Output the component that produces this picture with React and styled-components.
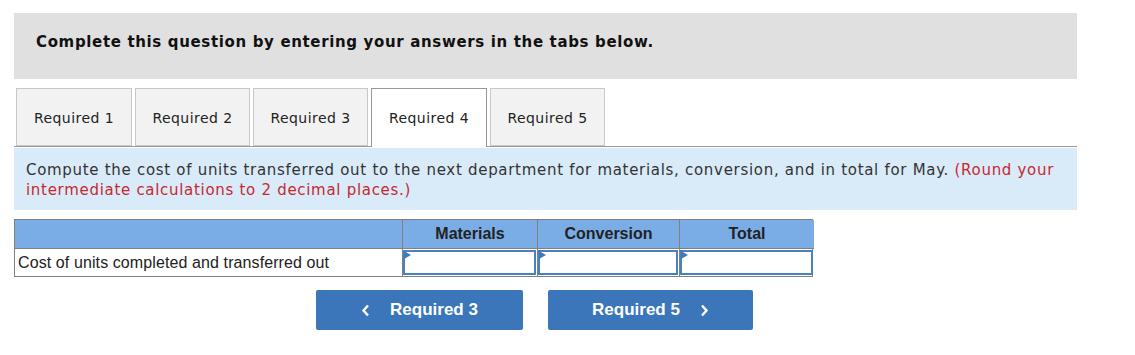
import styled, { createGlobalStyle } from "styled-components";

const GlobalStyle = createGlobalStyle`
  body {
    margin: 0;
    background: #fff;
    font-family: "DejaVu Sans", Verdana, sans-serif;
  }
`;

const Page = styled.div`
  width: 1063px;
  padding: 13px 0 0 14px;
`;

const Banner = styled.div`
  height: 66px;
  background: #e0e0e0;
  padding: 20px 22px 0;
  font-weight: bold;
  font-size: 15px;
  letter-spacing: 0.65px;
  color: #111;
  box-sizing: border-box;
`;

const TabStrip = styled.div`
  display: flex;
  align-items: flex-start;
  gap: 3px;
  margin-top: 9px;
  padding-left: 2px;
  border-bottom: 1px solid #999;
  height: 58px;
`;

const Tab = styled.div`
  width: ${(p) => p.w}px;
  height: ${(p) => (p.active ? 59 : 58)}px;
  margin-bottom: ${(p) => (p.active ? -1 : 0)}px;
  padding-top: ${(p) => (p.active ? 0 : 1)}px;
  box-sizing: border-box;
  display: flex;
  align-items: center;
  justify-content: center;
  font-size: 14px;
  letter-spacing: 0.45px;
  color: #222;
  background: ${(p) => (p.active ? "#fff" : "#f2f2f2")};
  border: 1px solid ${(p) => (p.active ? "#999" : "#c8c8c8")};
  border-bottom: ${(p) => (p.active ? "none" : "1px solid #c8c8c8")};
`;

const Prompt = styled.div`
  margin-top: 1px;
  height: 62px;
  box-sizing: border-box;
  background: #d9ebf9;
  padding: 12px 12px 0;
  font-size: 15px;
  line-height: 20px;
  letter-spacing: 0.7px;
  color: #333;
`;

const Red = styled.span`
  color: #c7282e;
`;

const Table = styled.div`
  margin-top: 9px;
  width: 799px;
  display: grid;
  grid-template-columns: 387px 135px 142px 135px;
  border: 1px solid #808080;
  box-sizing: border-box;
  font-family: "Liberation Sans", Arial, sans-serif;
`;

const HeadCell = styled.div`
  height: 28px;
  background: #7aade6;
  border-left: ${(p) => (p.first ? "none" : "1px solid #808080")};
  border-bottom: 1px solid #808080;
  display: flex;
  align-items: center;
  justify-content: center;
  font-weight: bold;
  font-size: 16px;
  color: #222;
`;

const LabelCell = styled.div`
  height: 27px;
  display: flex;
  align-items: center;
  padding-left: 3px;
  font-size: 16px;
  letter-spacing: 0.1px;
  color: #222;
`;

const InputCell = styled.div`
  height: 27px;
  border-left: 1px solid #808080;
  padding: 1px 1px 1px 0;
  box-sizing: border-box;
`;

const Field = styled.div`
  position: relative;
  height: 100%;
  box-sizing: border-box;
  border: 2px solid #4a7fc0;
  background: #fff;

  &::before {
    content: "";
    position: absolute;
    left: -1px;
    top: -1px;
    border-top: 4px solid transparent;
    border-bottom: 4px solid transparent;
    border-left: 7px solid #3f78bd;
  }
`;

const Nav = styled.div`
  display: flex;
  gap: 25px;
  margin-top: 13px;
  padding-left: 302px;
`;

const NavButton = styled.button`
  width: ${(p) => p.w}px;
  height: 40px;
  background: #3a76b9;
  border: none;
  border-radius: 2px;
  color: #fff;
  font-family: "Liberation Sans", Arial, sans-serif;
  font-weight: bold;
  font-size: 17px;
  display: flex;
  align-items: center;
  justify-content: center;
  gap: 20px;
  padding: 0;
`;

const Chevron = ({ dir }) => (
  <svg width="9" height="13" viewBox="0 0 9 13">
    <path
      d={dir === "left" ? "M7 1.5 L2.5 6.5 L7 11.5" : "M2 1.5 L6.5 6.5 L2 11.5"}
      fill="none"
      stroke="#fff"
      strokeWidth="2.4"
    />
  </svg>
);

const tabs = [
  { label: "Required 1", w: 116 },
  { label: "Required 2", w: 115 },
  { label: "Required 3", w: 115 },
  { label: "Required 4", w: 116, active: true },
  { label: "Required 5", w: 115 },
];

export default function App() {
  return (
    <Page>
      <GlobalStyle />
      <Banner>Complete this question by entering your answers in the tabs below.</Banner>
      <TabStrip>
        {tabs.map((t) => (
          <Tab key={t.label} w={t.w} active={t.active}>
            {t.label}
          </Tab>
        ))}
      </TabStrip>
      <Prompt>
        Compute the cost of units transferred out to the next department for materials,
        conversion, and in total for May.{" "}
        <Red>(Round your intermediate calculations to 2 decimal places.)</Red>
      </Prompt>
      <Table>
        <HeadCell first />
        <HeadCell>Materials</HeadCell>
        <HeadCell>Conversion</HeadCell>
        <HeadCell>Total</HeadCell>
        <LabelCell>Cost of units completed and transferred out</LabelCell>
        <InputCell>
          <Field />
        </InputCell>
        <InputCell>
          <Field />
        </InputCell>
        <InputCell>
          <Field />
        </InputCell>
      </Table>
      <Nav>
        <NavButton w={207}>
          <Chevron dir="left" />
          Required 3
        </NavButton>
        <NavButton w={205}>
          Required 5
          <Chevron dir="right" />
        </NavButton>
      </Nav>
    </Page>
  );
}
